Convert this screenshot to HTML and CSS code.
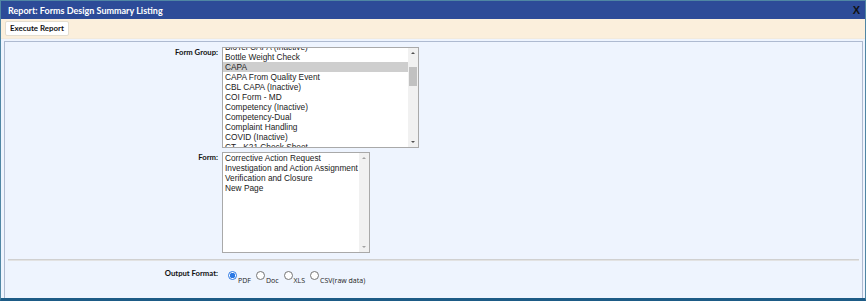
FILE: index.html
```html
<!DOCTYPE html>
<html>
<head>
<meta charset="utf-8">
<link rel="stylesheet" href="styles.css">
</head>
<body>
<div class="window">
  <div class="titlebar">
    <span class="title">Report: Forms Design Summary Listing</span>
    <span class="close">X</span>
  </div>
  <div class="toolbar">
    <button class="btn">Execute Report</button>
  </div>
  <div class="panel">
    <div class="row row-group">
      <div class="label">Form Group:</div>
      <div class="listbox lb-group">
        <div class="items">
          <div class="item cut">BioTel CAPA (Inactive)</div>
          <div class="item">Bottle Weight Check</div>
          <div class="item selected">CAPA</div>
          <div class="item">CAPA From Quality Event</div>
          <div class="item">CBL CAPA (Inactive)</div>
          <div class="item">COI Form - MD</div>
          <div class="item">Competency (Inactive)</div>
          <div class="item">Competency-Dual</div>
          <div class="item">Complaint Handling</div>
          <div class="item">COVID (Inactive)</div>
          <div class="item">CT - K21 Check Sheet</div>
        </div>
        <div class="scrollbar">
          <span class="arrow up"></span>
          <span class="track"><span class="thumb"></span></span>
          <span class="arrow down"></span>
        </div>
      </div>
    </div>
    <div class="row row-form">
      <div class="label">Form:</div>
      <div class="listbox lb-form">
        <div class="items">
          <div class="item">Corrective Action Request</div>
          <div class="item">Investigation and Action Assignment</div>
          <div class="item">Verification and Closure</div>
          <div class="item">New Page</div>
        </div>
        <div class="scrollbar disabled">
          <span class="arrow up"></span>
          <span class="track"></span>
          <span class="arrow down"></span>
        </div>
      </div>
    </div>
    <div class="divider"></div>
    <div class="row row-output">
      <div class="label">Output Format:</div>
      <div class="radios">
        <label class="radio"><span class="dot checked"></span><span class="rtext">PDF</span></label>
        <label class="radio"><span class="dot"></span><span class="rtext">Doc</span></label>
        <label class="radio"><span class="dot"></span><span class="rtext">XLS</span></label>
        <label class="radio"><span class="dot"></span><span class="rtext">CSV(raw data)</span></label>
      </div>
    </div>
  </div>
</div>
</body>
</html>
```
FILE: styles.css
```css
* { box-sizing: border-box; }
html, body { margin: 0; padding: 0; background: #ffffff; }
body { width: 866px; height: 301px; overflow: hidden; }

.window {
  width: 866px;
  height: 301px;
  border-left: 1px solid #4f86a4;
  border-right: 1px solid #4f86a4;
  border-top: 1px solid #4f86a4;
  border-bottom: 3px solid #1d5b86;
  background: #eef4fe;
  display: flex;
  flex-direction: column;
}

.titlebar {
  height: 18px;
  background: #2d4b98;
  display: flex;
  align-items: center;
  justify-content: space-between;
  padding: 0 5px 0 7px;
  flex: none;
}
.title {
  color: #ffffff;
  font-family: Lato, "Open Sans", sans-serif;
  font-weight: 700;
  font-size: 9px;
}
.close {
  color: #111111;
  font-family: "Liberation Sans", Arial, sans-serif;
  font-weight: 700;
  font-size: 11px;
}

.toolbar {
  height: 20px;
  background: #fbefdc;
  display: flex;
  align-items: center;
  padding: 0 4px;
  flex: none;
  border-bottom: 1px solid #f3eadb;
}
.btn {
  height: 15px;
  padding: 0 4px;
  background: #ffffff;
  border: 1px solid #e3ddd0;
  border-radius: 2px;
  font-family: Lato, "Open Sans", sans-serif;
  font-weight: 700;
  font-size: 7.9px;
  color: #111111;
  line-height: 13px;
}

.panel {
  flex: 1;
  margin: 2px 2px 0 3px;
  border: 1px solid #aebad0;
  border-bottom: none;
  background: #eef4fe;
  padding: 5px 3px 0 3px;
  display: flex;
  flex-direction: column;
}

.row {
  display: flex;
  align-items: flex-start;
}
.label {
  width: 214px;
  text-align: right;
  padding-right: 4px;
  font-family: Lato, "Open Sans", sans-serif;
  font-weight: 700;
  font-size: 7.7px;
  color: #111111;
  line-height: 11px;
}

.listbox {
  background: #ffffff;
  border: 1px solid #a9a9a9;
  display: flex;
  overflow: hidden;
}
.lb-group { width: 197px; height: 101px; }
.lb-form { width: 148px; height: 101px; }
.row-form { margin-top: 4px; }

.items {
  flex: 1;
  overflow: hidden;
  font-family: "Liberation Sans", Arial, sans-serif;
  font-size: 8.3px;
  color: #222222;
}
.lb-group .items { margin-top: -6px; }
.item {
  height: 10px;
  line-height: 10px;
  padding-left: 2px;
  white-space: nowrap;
}
.item.selected { background: #cecece; }

.scrollbar {
  width: 10px;
  flex: none;
  background: #f1f1f1;
  display: flex;
  flex-direction: column;
  align-items: center;
}
.arrow {
  height: 9px;
  width: 10px;
  flex: none;
  position: relative;
}
.arrow::after {
  content: "";
  position: absolute;
  left: 3px;
  border-left: 2px solid transparent;
  border-right: 2px solid transparent;
}
.arrow.up::after { top: 4px; border-bottom: 2px solid #505050; }
.arrow.down::after { top: 3px; border-top: 2px solid #505050; }
.scrollbar.disabled .arrow.up::after { border-bottom-color: #a3a3a3; }
.scrollbar.disabled .arrow.down::after { border-top-color: #a3a3a3; }
.track {
  flex: 1;
  width: 10px;
  padding: 0 1px;
}
.thumb {
  display: block;
  margin-top: 10px;
  height: 19px;
  background: #c1c1c1;
}

.divider {
  height: 2px;
  background: #d0d0d0;
  margin: 6px 0 0 0;
  border-bottom: 1px solid #e2e2e2;
}

.row-output { margin-top: 7px; }
.radios {
  display: flex;
  align-items: flex-start;
  padding-left: 6px;
  padding-top: 3px;
}
.radio {
  display: flex;
  align-items: flex-start;
  margin-right: 5px;
  font-family: "Open Sans", "Noto Sans", sans-serif;
  font-size: 7px;
  color: #222222;
}
.dot {
  width: 9px;
  height: 9px;
  border-radius: 50%;
  border: 1px solid #767676;
  background: #ffffff;
  flex: none;
  margin-right: 1px;
}
.dot.checked {
  border-color: #2b78e4;
  background: radial-gradient(circle, #2b78e4 0 2.6px, #ffffff 3px);
}
.rtext {
  padding-top: 5px;
  line-height: 10px;
  color: #222222;
}
```
